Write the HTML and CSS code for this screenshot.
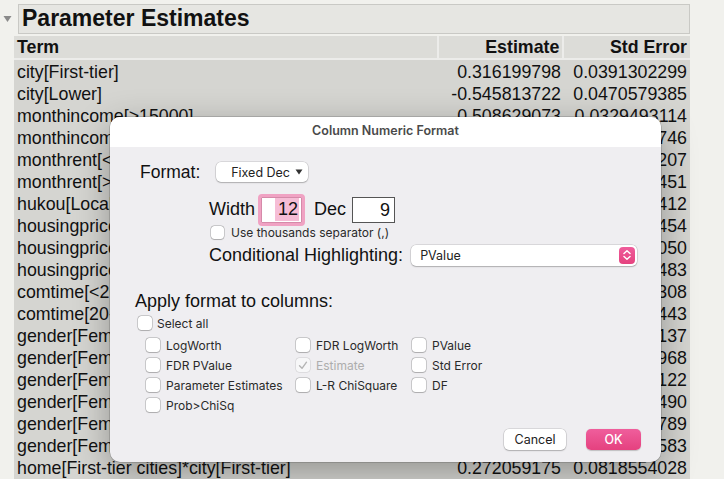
FILE: index.html
```html
<!DOCTYPE html>
<html>
<head>
<meta charset="utf-8">
<link rel="stylesheet" href="styles.css">
</head>
<body>
<div class="report">
  <div class="title-row">
    <svg class="disclosure" width="9" height="8" viewBox="0 0 9 8"><path d="M0.5 1 L8.5 1 L4.5 7 Z" fill="#8a8a8a"/></svg>
    <div class="title-box">Parameter Estimates</div>
  </div>
  <div class="table">
    <div class="row head">
      <div class="c-term">Term</div>
      <div class="c-num sep">Estimate</div>
      <div class="c-num sep">Std Error</div>
    </div>
    <div class="body">
      <div class="row"><div class="c-term">city[First-tier]</div><div class="c-num">0.316199798</div><div class="c-num">0.0391302299</div></div>
      <div class="row"><div class="c-term">city[Lower]</div><div class="c-num">-0.545813722</div><div class="c-num">0.0470579385</div></div>
      <div class="row"><div class="c-term">monthincome[&gt;15000]</div><div class="c-num">0.508629073</div><div class="c-num">0.0329493114</div></div>
      <div class="row"><div class="c-term">monthincome[5000-15000]</div><div class="c-num">0.184230571</div><div class="c-num">0.0254183746</div></div>
      <div class="row"><div class="c-term">monthrent[&lt;1000]</div><div class="c-num">-0.207613954</div><div class="c-num">0.0318824207</div></div>
      <div class="row"><div class="c-term">monthrent[&gt;3000]</div><div class="c-num">0.152394817</div><div class="c-num">0.0402718451</div></div>
      <div class="row"><div class="c-term">hukou[Local]</div><div class="c-num">0.098126342</div><div class="c-num">0.0219674412</div></div>
      <div class="row"><div class="c-term">housingprice[&lt;10000]</div><div class="c-num">-0.313462081</div><div class="c-num">0.0361225454</div></div>
      <div class="row"><div class="c-term">housingprice[10000-30000]</div><div class="c-num">0.067285513</div><div class="c-num">0.0298711050</div></div>
      <div class="row"><div class="c-term">housingprice[&gt;50000]</div><div class="c-num">0.421930162</div><div class="c-num">0.0517342483</div></div>
      <div class="row"><div class="c-term">comtime[&lt;20min]</div><div class="c-num">0.115074298</div><div class="c-num">0.0286530308</div></div>
      <div class="row"><div class="c-term">comtime[20-40min]</div><div class="c-num">0.040512667</div><div class="c-num">0.0271904443</div></div>
      <div class="row"><div class="c-term">gender[Female]*city[First-tier]</div><div class="c-num">0.026831954</div><div class="c-num">0.0390218137</div></div>
      <div class="row"><div class="c-term">gender[Female]*city[Lower]</div><div class="c-num">-0.061247305</div><div class="c-num">0.0462391968</div></div>
      <div class="row"><div class="c-term">gender[Female]*monthincome[&gt;15000]</div><div class="c-num">0.072305819</div><div class="c-num">0.0331647122</div></div>
      <div class="row"><div class="c-term">gender[Female]*monthrent[&lt;1000]</div><div class="c-num">-0.018562904</div><div class="c-num">0.0316782490</div></div>
      <div class="row"><div class="c-term">gender[Female]*hukou[Local]</div><div class="c-num">0.033910276</div><div class="c-num">0.0220831789</div></div>
      <div class="row"><div class="c-term">gender[Female]*comtime[&lt;20min]</div><div class="c-num">0.009471538</div><div class="c-num">0.0284175583</div></div>
      <div class="row"><div class="c-term">home[First-tier cities]*city[First-tier]</div><div class="c-num">0.272059175</div><div class="c-num">0.0818554028</div></div>
    </div>
  </div>
</div>

<div class="dialog">
  <div class="dlg-title">Column Numeric Format</div>
  <div class="dlg-body">
    <div class="r-format">
      <span class="lbl lbl-format">Format:</span>
      <span class="popup">Fixed Dec <svg width="8" height="6" viewBox="0 0 8 6"><path d="M0.5 0.5 L7.5 0.5 L4 5.5 Z" fill="#333"/></svg></span>
    </div>
    <div class="r-width">
      <span class="lbl">Width</span>
      <span class="winput"><span class="sel">12</span></span>
      <span class="lbl lbl-dec">Dec</span>
      <span class="dinput">9</span>
    </div>
    <div class="r-thousands">
      <span class="cb cb-small"></span>
      <span class="small">Use thousands separator (,)</span>
    </div>
    <div class="r-cond">
      <span class="lbl">Conditional Highlighting:</span>
      <span class="select">
        <span>PValue</span>
        <span class="stepper"><svg width="10" height="12" viewBox="0 0 10 12"><path d="M2 4.5 L5 1.8 L8 4.5 M2 7.5 L5 10.2 L8 7.5" fill="none" stroke="#fff" stroke-width="1.5" stroke-linecap="round" stroke-linejoin="round"/></svg></span>
      </span>
    </div>
    <div class="r-apply lbl">Apply format to columns:</div>
    <div class="r-selall">
      <span class="cb"></span><span class="small">Select all</span>
    </div>
    <div class="grid">
      <div class="item"><span class="cb"></span><span class="small">LogWorth</span></div>
      <div class="item"><span class="cb"></span><span class="small">FDR LogWorth</span></div>
      <div class="item"><span class="cb"></span><span class="small">PValue</span></div>
      <div class="item"><span class="cb"></span><span class="small">FDR PValue</span></div>
      <div class="item disabled"><span class="cb checked"><svg width="10" height="9" viewBox="0 0 10 9"><path d="M1.5 4.8 L4 7.3 L8.5 1.2" fill="none" stroke="#b4b4b4" stroke-width="1.4" stroke-linecap="round" stroke-linejoin="round"/></svg></span><span class="small">Estimate</span></div>
      <div class="item"><span class="cb"></span><span class="small">Std Error</span></div>
      <div class="item"><span class="cb"></span><span class="small">Parameter Estimates</span></div>
      <div class="item"><span class="cb"></span><span class="small">L-R ChiSquare</span></div>
      <div class="item"><span class="cb"></span><span class="small">DF</span></div>
      <div class="item"><span class="cb"></span><span class="small">Prob&gt;ChiSq</span></div>
    </div>
    <div class="buttons">
      <span class="btn cancel">Cancel</span>
      <span class="btn ok">OK</span>
    </div>
  </div>
</div>
</body>
</html>
```

FILE: styles.css
```css
html, body {
  margin: 0;
  padding: 0;
}
body {
  background: #f1f1ed;
  width: 724px;
  height: 479px;
  overflow: hidden;
  font-family: "Liberation Sans", Arial, sans-serif;
  color: #111;
}
.report {
  padding-top: 4px;
}
.title-row {
  display: flex;
  align-items: center;
  height: 30px;
}
.disclosure {
  margin-left: 3px;
  margin-right: 6px;
}
.title-box {
  box-sizing: border-box;
  width: 672px;
  height: 30px;
  border: 1px solid #c9c9c5;
  background: #e6e6e2;
  font-weight: bold;
  font-size: 23px;
  line-height: 27px;
  padding-left: 3px;
  color: #111;
}
.table {
  margin: 2px 0 0 14px;
  width: 676px;
}
.row {
  display: flex;
  height: 22px;
  line-height: 22px;
  font-size: 17.8px;
  white-space: nowrap;
}
.row.head {
  background: #dcdcd8;
  font-weight: bold;
  border-bottom: 2px solid #ececea;
}
.body {
  background: #d5d5d1;
  padding-top: 1px;
}
.c-term {
  width: 424px;
  padding-left: 3px;
  box-sizing: border-box;
  overflow: hidden;
}
.c-num {
  width: 126px;
  box-sizing: border-box;
  text-align: right;
  padding-right: 3px;
}
.sep {
  border-left: 2px solid #ececea;
}
.row.head .c-num:last-child {
  width: 128px;
}

/* dialog */
.dialog {
  position: absolute;
  left: 110px;
  top: 117px;
  width: 551px;
  height: 345px;
  border-radius: 10px;
  overflow: hidden;
  background: #efeef1;
  box-shadow: 0 0 0 0.5px rgba(0,0,0,0.28), 0 10px 36px rgba(0,0,0,0.32);
}
.dlg-title {
  height: 30px;
  background: #ffffff;
  text-align: center;
  font-family: Inter, "Noto Sans", sans-serif;
  font-weight: 600;
  font-size: 12.5px;
  line-height: 28px;
  color: #4a4a4a;
}
.dlg-body {
  display: flex;
  flex-direction: column;
  padding-top: 14px;
}
.lbl {
  font-family: "Liberation Sans", Arial, sans-serif;
  font-size: 18px;
  color: #111;
}
.small {
  font-family: Inter, "Noto Sans", sans-serif;
  font-size: 12px;
  color: #2a2a2a;
}
.r-format {
  display: flex;
  align-items: center;
  height: 22px;
  padding-left: 30px;
}
.lbl-format {
  width: 76px;
  font-size: 17.5px;
}
.popup {
  box-sizing: border-box;
  width: 92px;
  height: 20px;
  display: flex;
  align-items: center;
  justify-content: flex-end;
  gap: 5px;
  padding-right: 5px;
  background: #fff;
  border-radius: 5px;
  box-shadow: 0 0 0 0.5px rgba(0,0,0,0.18), 0 1px 1.5px rgba(0,0,0,0.2);
  font-family: Inter, "Noto Sans", sans-serif;
  font-size: 12.5px;
  color: #222;
}
.r-width {
  display: flex;
  align-items: center;
  height: 31px;
  margin-top: 11px;
  padding-left: 99px;
}
.winput {
  box-sizing: border-box;
  width: 47px;
  height: 32px;
  margin-left: 3px;
  border: 3px solid #f0a2c3;
  border-radius: 4px;
  background: #fff;
  box-shadow: inset 0 0 0 1px #d58aa9;
  display: flex;
  align-items: center;
  justify-content: flex-end;
  padding-right: 3px;
}
.sel {
  background: #f6bdd6;
  font-size: 18px;
  line-height: 23px;
  padding: 0 1px 0 3px;
}
.lbl-dec {
  margin-left: 9px;
}
.dinput {
  box-sizing: border-box;
  width: 43px;
  height: 26px;
  margin-left: 6px;
  border: 1px solid #555;
  background: #fff;
  font-size: 18px;
  line-height: 24px;
  text-align: right;
  padding-right: 4px;
}
.r-thousands {
  display: flex;
  align-items: center;
  height: 14px;
  padding-left: 101px;
  gap: 7px;
}
.cb {
  box-sizing: border-box;
  width: 14px;
  height: 14px;
  border-radius: 3.5px;
  background: #fff;
  box-shadow: 0 0 0 0.5px rgba(0,0,0,0.3), 0 0.5px 1px rgba(0,0,0,0.15);
  flex: none;
  display: flex;
  align-items: center;
  justify-content: center;
}
.cb-small {
  width: 13px;
  height: 13px;
}
.cb.checked {
  background: #f7f7f8;
  box-shadow: 0 0 0 0.5px rgba(0,0,0,0.15);
}
.r-cond {
  display: flex;
  align-items: center;
  height: 22px;
  margin-top: 5px;
  padding-left: 99px;
  gap: 8px;
}
.select {
  box-sizing: border-box;
  width: 226px;
  height: 21px;
  background: #fff;
  border-radius: 5px;
  box-shadow: 0 0 0 0.5px rgba(0,0,0,0.18), 0 1px 1.5px rgba(0,0,0,0.2);
  display: flex;
  align-items: center;
  justify-content: space-between;
  padding: 0 2px 0 9px;
  font-family: Inter, "Noto Sans", sans-serif;
  font-size: 12.5px;
  color: #222;
}
.stepper {
  width: 16px;
  height: 17px;
  border-radius: 4px;
  background: linear-gradient(#ef5c9b, #e5427f);
  display: flex;
  align-items: center;
  justify-content: center;
}
.r-apply {
  height: 22px;
  line-height: 22px;
  margin-top: 24px;
  padding-left: 25px;
}
.r-selall {
  display: flex;
  align-items: center;
  height: 18px;
  margin-top: 2px;
  padding-left: 28px;
  gap: 5px;
}
.grid {
  display: grid;
  grid-template-columns: 150px 116px 120px;
  grid-auto-rows: 20px;
  margin-top: 3px;
  padding-left: 36px;
}
.item {
  display: flex;
  align-items: center;
  gap: 6px;
}
.item.disabled .small {
  color: #adadad;
}
.buttons {
  display: flex;
  justify-content: flex-end;
  gap: 20px;
  padding-right: 20px;
  margin-top: 14px;
}
.btn {
  box-sizing: border-box;
  height: 21px;
  border-radius: 5px;
  display: flex;
  align-items: center;
  justify-content: center;
  font-family: Inter, "Noto Sans", sans-serif;
  font-size: 12.5px;
}
.cancel {
  width: 62px;
  background: #fff;
  color: #222;
  box-shadow: 0 0 0 0.5px rgba(0,0,0,0.18), 0 1px 1.5px rgba(0,0,0,0.2);
}
.ok {
  width: 55px;
  background: linear-gradient(#ef5e9c, #e5417f);
  color: #fff;
  font-weight: 500;
  box-shadow: 0 0.5px 1px rgba(0,0,0,0.2);
}
```
